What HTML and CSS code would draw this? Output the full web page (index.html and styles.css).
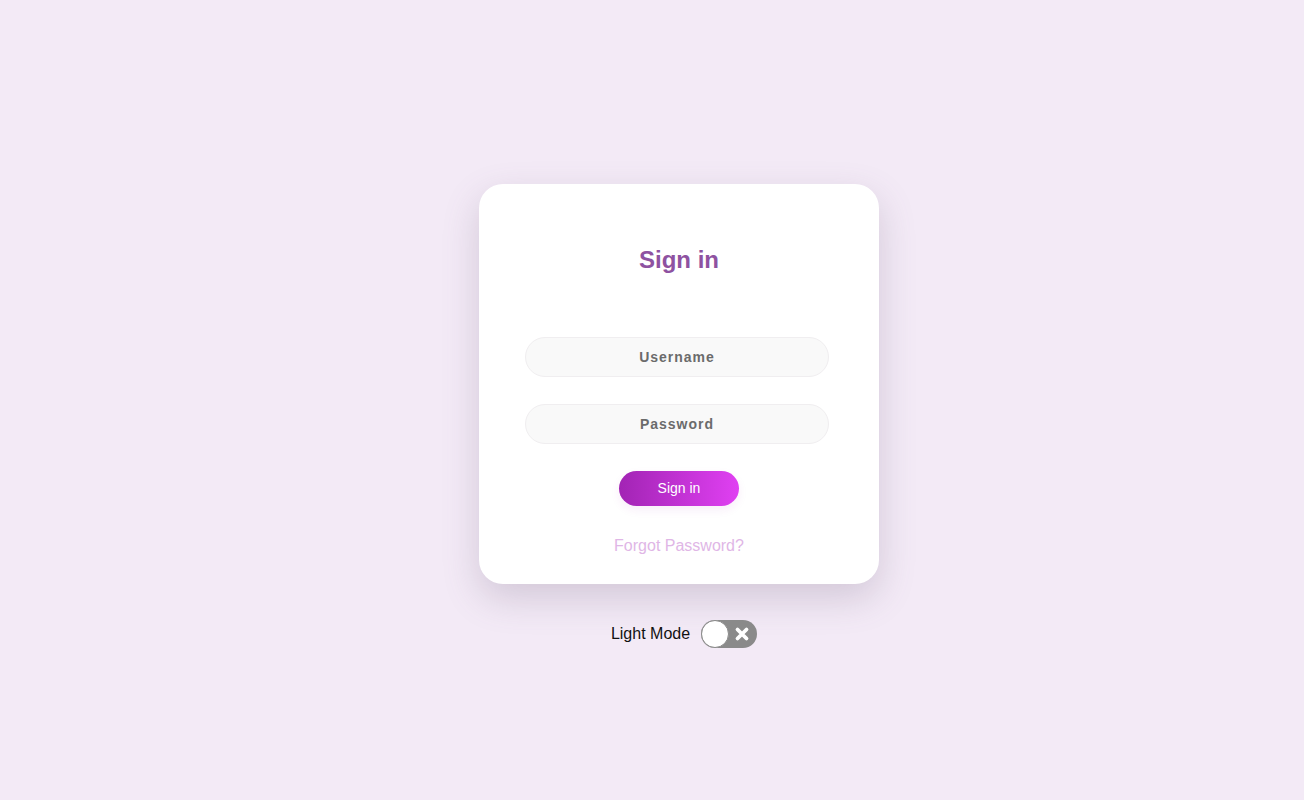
FILE: index.html
```html
<!DOCTYPE html>
<html lang="en">
<head>
<meta charset="utf-8">
<title>Sign in</title>
<link rel="stylesheet" href="styles.css">
</head>
<body>
<main class="page">
  <form class="card">
    <h1 class="title">Sign in</h1>
    <input class="field" type="text" placeholder="Username">
    <input class="field field-second" type="password" placeholder="Password">
    <button class="btn" type="button">Sign in</button>
    <a class="forgot" href="#">Forgot Password?</a>
  </form>
  <div class="mode">
    <span class="mode-label">Light Mode</span>
    <span class="toggle">
      <span class="knob"></span>
      <svg class="cross" viewBox="0 0 16 16" width="16" height="16" aria-hidden="true">
        <path d="M3.5 3.5 L12.5 12.5 M12.5 3.5 L3.5 12.5" stroke="#fff" stroke-width="3.8" stroke-linecap="round" fill="none"/>
      </svg>
    </span>
  </div>
</main>
</body>
</html>
```

FILE: styles.css
```css
html, body {
  margin: 0;
  padding: 0;
}
body {
  background: #f3eaf6;
  font-family: "Liberation Sans", Arial, sans-serif;
  min-height: 800px;
}
.page {
  display: flex;
  flex-direction: column;
  align-items: center;
  padding-top: 184px;
  padding-left: 54px;
}
.card {
  box-sizing: border-box;
  width: 400px;
  height: 400px;
  background: #fff;
  border-radius: 24px;
  box-shadow: 0 14px 36px rgba(110, 90, 120, 0.24);
  display: flex;
  flex-direction: column;
  align-items: center;
  padding: 62px 0 0;
}
.title {
  margin: 0;
  font-size: 24px;
  line-height: 28px;
  font-weight: bold;
  color: #8e52a1;
}
.field {
  box-sizing: border-box;
  margin: 63px 4px 0 0;
  width: 304px;
  height: 40px;
  border: 1.5px solid #f0eef0;
  border-radius: 20px;
  background: #f9f9f9;
  text-align: center;
  font-family: "Liberation Sans", Arial, sans-serif;
  font-size: 14px;
  font-weight: bold;
  letter-spacing: 1px;
  outline: none;
}
.field::placeholder {
  color: #6b6b6b;
  opacity: 1;
}
.field-second {
  margin-top: 27px;
}
.btn {
  margin-top: 27px;
  width: 120px;
  height: 35px;
  border: none;
  border-radius: 18px;
  background: linear-gradient(90deg, #a224b4, #e040f2);
  color: #fff;
  font-family: "Liberation Sans", Arial, sans-serif;
  font-size: 14px;
  padding: 0 0 2px;
  box-shadow: 0 4px 10px rgba(160, 40, 180, 0.08);
  cursor: pointer;
}
.forgot {
  margin-top: 31px;
  font-size: 16px;
  line-height: 18px;
  color: #e0b6e6;
  text-decoration: none;
}
.mode {
  margin-top: 36px;
  margin-left: 10px;
  display: flex;
  align-items: center;
  gap: 11px;
}
.mode-label {
  font-size: 16px;
  color: #111;
}
.toggle {
  position: relative;
  box-sizing: border-box;
  width: 56px;
  height: 28px;
  border-radius: 14px;
  background: #8a8a8a;
  display: flex;
  align-items: center;
  justify-content: flex-end;
  padding-right: 7px;
}
.knob {
  position: absolute;
  left: 0;
  top: 0;
  box-sizing: border-box;
  width: 28px;
  height: 28px;
  border-radius: 50%;
  background: #fff;
  border: 1px solid #8a8a8a;
}
.cross {
  display: block;
}
```
